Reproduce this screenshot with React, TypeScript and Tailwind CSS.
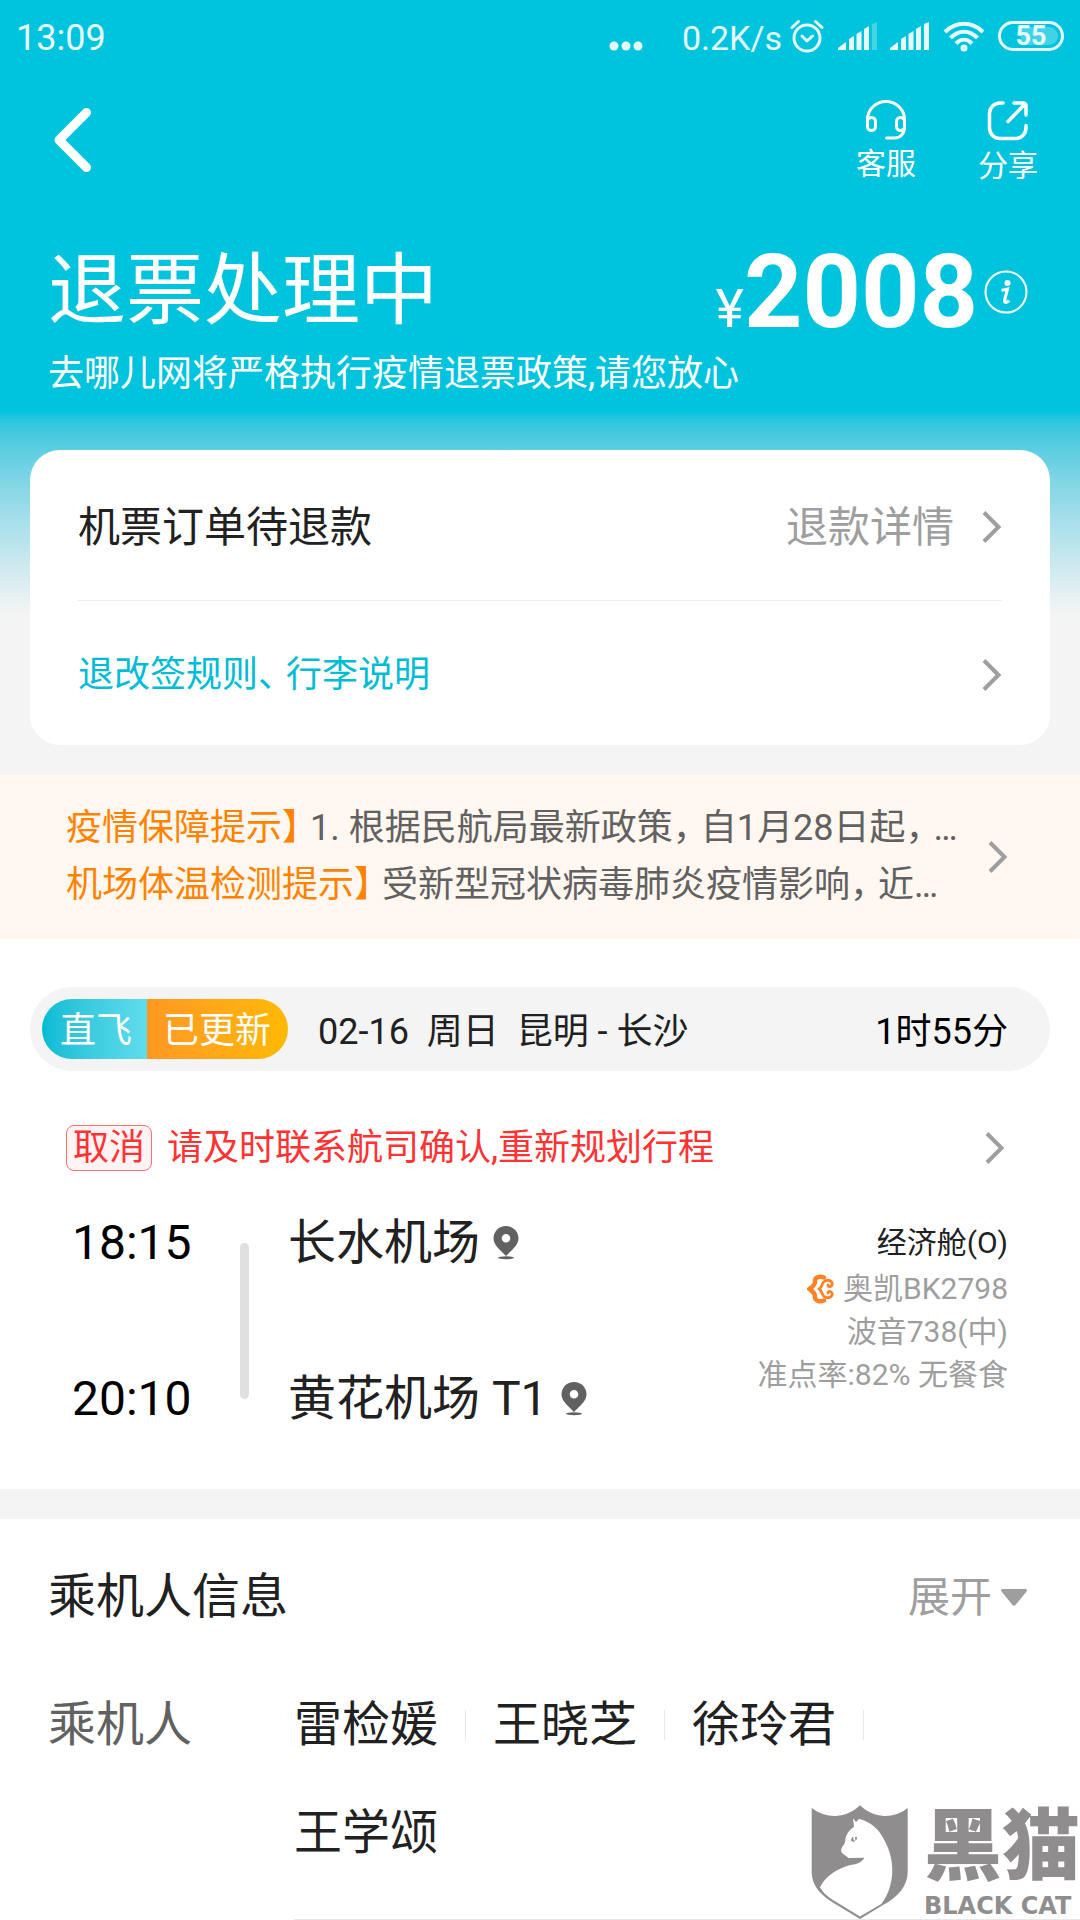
import type { ReactNode } from 'react'

const passengers = ['雷检媛', '王晓芝', '徐玲君', '王学颂']

function Chevron() {
  return (
    <svg className="h-9 w-5 shrink-0" viewBox="0 0 20 36" fill="none" stroke="#9e9e9e" strokeWidth="4">
      <path d="M2 3.500 16.500 18 2 32.500" />
    </svg>
  )
}

// Half-width punctuation with a small gap after it
function Mark({ children }: { children: ReactNode }) {
  return <span className="mr-2.5 [font-feature-settings:'halt']">{children}</span>
}

function Pin() {
  return (
    <svg className="h-9 w-7 shrink-0" viewBox="0 0 28 36">
      <path
        fill="#616161"
        fillRule="evenodd"
        d="M14 1C7 1 1.500 6.500 1.500 13.300 1.500 20 8 25 14 31c6-6 12.500-11 12.500-17.700C26.500 6.500 21 1 14 1Zm0 8a4.300 4.300 0 1 1 0 8.600A4.300 4.300 0 0 1 14 9Z"
      />
      <ellipse cx="14" cy="32.800" rx="8" ry="1.500" fill="#616161" />
    </svg>
  )
}

function Signal({ weak = false }: { weak?: boolean }) {
  return (
    <svg className="h-7 w-10" viewBox="0 0 40 28" fill="#e6fafd">
      <path d="M0 28v-2l8-6v8ZM11 28V17l5-3v14ZM18.500 28V12l5-3v19ZM26 28V7l5-3v24Z" />
      <path d="M34 28V2l5-2v28Z" opacity={weak ? 0.3 : 1} />
    </svg>
  )
}

function StatusBar() {
  return (
    <div className="flex h-18 items-center px-4 text-[#e6fafd]">
      <span className="pt-1 text-4xl">13:09</span>
      <div className="ml-auto flex items-center">
        <svg className="mt-5 mr-[38px] h-3 w-9" viewBox="0 0 36 12" fill="currentColor">
          <circle cx="6" cy="6" r="4.500" />
          <circle cx="18" cy="6" r="4.500" />
          <circle cx="30" cy="6" r="4.500" />
        </svg>
        <span className="mr-2 pt-1 text-[34px]">0.2K/s</span>
        <svg
          className="mr-3 size-9"
          viewBox="0 0 36 36"
          fill="none"
          stroke="currentColor"
          strokeWidth="3"
          strokeLinecap="round"
          strokeLinejoin="round"
        >
          <circle cx="17" cy="20" r="13" />
          <path d="m2 9.500 6.500-6M25.500 3.500l6.500 6M12 18l5 5 5.500-5" />
        </svg>
        <Signal weak />
        <div className="w-3" />
        <Signal />
        <svg
          className="mx-3 h-8 w-11"
          viewBox="0 0 44 32"
          fill="none"
          stroke="currentColor"
          strokeWidth="4"
        >
          <path d="M3 12C14 1 30 1 41 12M8.500 18c8-8.500 19-8.500 27 0M14 23.500c5-5 11-5 16 0" />
          <circle cx="22" cy="28" r="1.500" />
        </svg>
        <div className="relative flex h-[30px] w-[66px] items-center justify-center rounded-full border-3 border-[#e6fafd]">
          <span className="absolute inset-y-[3px] right-[3px] left-5 rounded-r-full bg-white/25" />
          <span className="relative text-[27px] leading-none font-bold">55</span>
        </div>
      </div>
    </div>
  )
}

function HeaderButton({ label, children }: { label: string; children: ReactNode }) {
  return (
    <button type="button" className="flex flex-col items-center text-3xl leading-10 text-white">
      {children}
      {label}
    </button>
  )
}

function Header() {
  return (
    <header className="bg-linear-to-b from-[#00c4dd] from-[412px] to-[#f4f4f4] to-[613px] pb-[30px] text-white">
      <StatusBar />
      <div className="flex items-start justify-between pt-6 pr-[42px] pl-[50px]">
        <button type="button" aria-label="返回" className="mt-2">
          <svg
            className="h-[72px] w-11"
            viewBox="0 0 44 72"
            fill="none"
            stroke="currentColor"
            strokeWidth="9"
            strokeLinecap="round"
            strokeLinejoin="round"
          >
            <path d="M36.500 8.500 9 36l27.500 27.500" />
          </svg>
        </button>
        <div className="flex gap-[62px]">
          <HeaderButton label="客服">
            <svg
              className="my-1 h-10 w-11"
              viewBox="0 0 44 40"
              fill="none"
              stroke="currentColor"
              strokeWidth="3"
              strokeLinecap="round"
            >
              <path d="M3.500 22v-2.500a18.500 18 0 0 1 37 0v8c0 6-4 10.500-10 10.500h-8" />
              <rect x="3.500" y="17.500" width="8" height="13" rx="4" />
              <rect x="32.500" y="17.500" width="8" height="13" rx="4" />
            </svg>
          </HeaderButton>
          <HeaderButton label="分享">
            <svg
              className="my-1 size-[42px]"
              viewBox="0 0 42 42"
              fill="none"
              stroke="currentColor"
              strokeWidth="3.500"
              strokeLinecap="round"
              strokeLinejoin="round"
            >
              <path d="M16 3h-3A10.500 10.500 0 0 0 2.500 13.500v14.500A10.500 10.500 0 0 0 13 38.500h15.500A10.500 10.500 0 0 0 39 28v-2.500M27 3h9.500A2.500 2.500 0 0 1 39 5.500V15M21 21.500 38 4" />
            </svg>
          </HeaderButton>
        </div>
      </div>
      <div className="flex items-center justify-between px-12 pt-12">
        <h1 className="text-[78px] leading-[116px]">退票处理中</h1>
        <div className="flex items-center pr-1">
          <p className="flex items-baseline">
            <span className="text-[54px] leading-none">¥</span>
            <span className="text-[102px] leading-[116px] font-bold">2008</span>
          </p>
          <button type="button" aria-label="费用说明" className="ml-1.5">
            <svg className="size-11" viewBox="0 0 44 44" fill="none" stroke="currentColor" strokeWidth="2">
              <circle cx="22" cy="22" r="20.500" />
              <circle cx="23.500" cy="13" r="3" fill="currentColor" stroke="none" />
              <path d="M17.500 20.500 23.500 19l-3 11.500c-.6 2.500 2.500 2.500 4.500 0" strokeWidth="3" />
            </svg>
          </button>
        </div>
      </div>
      <p className="pl-12 text-4xl leading-12">去哪儿网将严格执行疫情退票政策,请您放心</p>

      <div className="mx-[30px] mt-[52px] rounded-[30px] bg-white px-12 text-[#212121]">
        <a href="#refund" className="flex h-[151px] items-center border-b border-[#eee] pt-1 text-[42px]">
          机票订单待退款
          <span className="mr-7 ml-auto text-[#9e9e9e]">退款详情</span>
          <Chevron />
        </a>
        <a href="#rules" className="flex h-36 items-center justify-between pt-1 text-4xl text-[#00bcd4]">
          <span>
            退改签规则<Mark>、</Mark>行李说明
          </span>
          <Chevron />
        </a>
      </div>
    </header>
  )
}

function Notice() {
  return (
    <a
      href="#notice"
      className="flex items-center justify-between bg-[#fff7f0] py-[25px] pr-[72px] pl-[66px] text-4xl leading-[57px] whitespace-nowrap text-[#616161]"
    >
      <div>
        <p>
          <span className="text-[#ff8300]">
            疫情保障提示<Mark>】</Mark>
          </span>
          1. 根据民航局最新政策<Mark>，</Mark>自1月28日起<Mark>，</Mark>…
        </p>
        <p>
          <span className="text-[#ff8300]">
            机场体温检测提示<Mark>】</Mark>
          </span>
          受新型冠状病毒肺炎疫情影响<Mark>，</Mark>近…
        </p>
      </div>
      <Chevron />
    </a>
  )
}

function AirlineLogo() {
  return (
    <svg className="h-[30px] w-7" viewBox="0 0 28 30" fill="none" stroke="#ff8226" strokeLinecap="round">
      <path
        strokeWidth="4.500"
        d="M17 3.500C12 1.500 7.500 3.500 8 8c0 3-3 5-5.500 7C5 17 8 19 8 22c-.5 4.500 4 6.500 9 4.500"
      />
      <path
        strokeWidth="2.800"
        d="M12 15c4-2 2-6.500 6-8 4-2 8 .5 7 4-1 2.500-4 2-4 0M12 15c4 2 2 6.500 6 8 4 2 8-.5 7-4-1-2.500-4-2-4 0"
      />
    </svg>
  )
}

function Flight() {
  return (
    <section className="bg-white px-[30px] pt-12 pb-[54px] text-[#212121]">
      <div className="flex h-21 items-center rounded-full bg-[#f4f4f4] pr-[42px] pl-3 text-4xl">
        <div className="flex h-15 items-center overflow-hidden rounded-full text-white">
          <span className="flex h-full items-center bg-linear-to-r from-[#00bcd4] to-[#5edded] pt-1 pr-[15px] pl-[18px]">
            直飞
          </span>
          <span className="flex h-full items-center bg-linear-to-r from-[#ff9823] to-[#ffb900] pt-1 pr-[17px] pl-4">
            已更新
          </span>
        </div>
        <span className="ml-[30px] pt-1.5 whitespace-pre">02-16  周日  昆明 - 长沙</span>
        <span className="ml-auto pt-1.5 text-black">1时55分</span>
      </div>

      <a href="#cancel" className="mt-[53px] flex h-12 items-center pr-[45px] pl-9 text-4xl text-[#ff3333]">
        <span className="mr-[15px] rounded-lg border border-[#ff7070] bg-[#fff3f3] px-1.5 leading-11">取消</span>
        请及时联系航司确认,重新规划行程
        <span className="ml-auto">
          <Chevron />
        </span>
      </a>

      <div className="mt-[35px] flex pr-[42px] pl-[42px]">
        <div className="flex w-42 flex-col justify-between text-5xl leading-[72px] text-black">
          <time>18:15</time>
          <time>20:10</time>
        </div>
        <div className="my-9 h-[156px] w-[9px] rounded-full bg-[#e0e0e0]" />
        <div className="ml-[39px] flex flex-col justify-between text-5xl leading-[72px]">
          <p className="flex items-center gap-3">
            长水机场 <Pin />
          </p>
          <p className="flex items-center gap-3">
            黄花机场 T1 <Pin />
          </p>
        </div>
        <div className="mt-3 ml-auto text-right text-3xl leading-[43px] text-[#9e9e9e]">
          <p className="leading-12 text-[#212121]">经济舱(O)</p>
          <p className="flex items-center justify-end gap-2">
            <AirlineLogo />
            奥凯BK2798
          </p>
          <p>波音738(中)</p>
          <p>准点率:82% 无餐食</p>
        </div>
      </div>
    </section>
  )
}

function Passengers() {
  return (
    <section className="border-t-[30px] border-[#f4f4f4] bg-white pl-12 text-5xl text-[#212121]">
      <div className="flex items-center justify-between pt-[42px] pr-[52px]">
        <h2 className="leading-[72px]">乘机人信息</h2>
        <button type="button" className="flex items-center gap-2 pt-0.5 text-[42px] text-[#9e9e9e]">
          展开
          <svg className="h-5 w-7" viewBox="0 0 28 20" fill="#9e9e9e">
            <path d="M2.500 1h23c1.500 0 2 1.500 1 2.500L15.500 17c-1 1-2 1-3 0L1.500 3.500C.5 2.500 1 1 2.500 1Z" />
          </svg>
        </button>
      </div>
      <div className="mt-[38px] flex leading-[108px]">
        <h3 className="w-[246px] shrink-0 text-[#616161]">乘机人</h3>
        <ul className="flex grow flex-wrap border-b border-[#e8e8e8] pr-16 pb-8">
          {passengers.map((name, i) => (
            <li key={name} className="flex items-center">
              {name}
              {i < passengers.length - 1 && <span className="mx-[27px] h-[30px] w-px bg-[#e8e8e8]" />}
            </li>
          ))}
        </ul>
      </div>
    </section>
  )
}

function Watermark() {
  return (
    <div className="absolute right-0 bottom-0 flex items-start gap-[14px] text-[#8f8d8e]">
      <svg className="h-[116px] w-[100px]" viewBox="0 0 100 116">
        <path
          fill="currentColor"
          d="M1.700 4C16 15 36 15 50 1.300 64 15 84 15 97.700 4v63.700C97.700 82 88 93 73 101L50 115 27 101C11 92 1.700 82 1.700 67.700Z"
        />
        {/* cat */}
        <path
          fill="#fff"
          d="M43 14.300 46 18 49 15c5 1 8 2.700 10 4 7 4 11 9 14.500 15.500C79 44 82.300 55 82.300 66c0 13-4 25-11 34L50 112.500 27 98.500C19 94 13 89 10 83.300c3-6 6-9 10-12.300 5-4 10-6.500 15-8.300 5-1.700 9-2 13-3.400 3-1.300 5-3 6.300-5.600l-16 .3C36 51 31 50 31 46c1-4 3.500-5 4-8.300.5-4 1-6 2.700-8.700 2-3 4-4.500 6.300-6.300Z"
        />
        <path fill="currentColor" d="M41 36c.5-2 1.500-3 2.500-3.500-.5 2 0 3.500 1.500 5-2 .5-3.500 0-4-1.500ZM45 33l2 0c0 2-.5 3-1.500 4Z" />
      </svg>
      <div>
        <p className="text-[78px] leading-[88px] font-black">黑猫</p>
        <p className="font-['DejaVu_Sans',sans-serif] text-2xl leading-7 font-bold">BLACK CAT</p>
      </div>
    </div>
  )
}

export default function App() {
  return (
    <div className="relative overflow-hidden bg-white font-['Roboto','Noto_Sans_CJK_SC',sans-serif]">
      <Header />
      <Notice />
      <Flight />
      <Passengers />
      <Watermark />
    </div>
  )
}
